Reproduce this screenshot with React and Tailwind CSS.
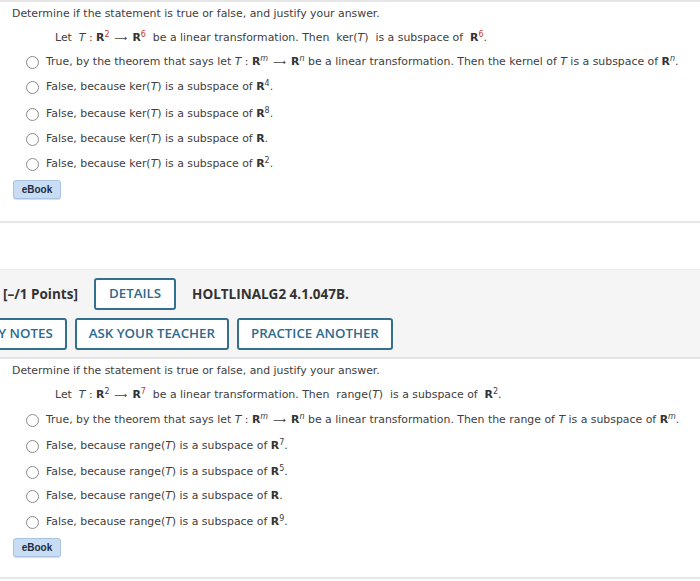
import React from "react";

const body = { fontFamily: '"DejaVu Sans", Verdana, sans-serif' };
const ui = { fontFamily: '"Open Sans", "Liberation Sans", sans-serif' };

function R({ sup, red, it }) {
  return (
    <span>
      <b className="text-[#333]">R</b>
      {sup && (
        <sup className={`text-[8px] ${red ? "text-[#c0392b]" : ""} ${it ? "italic" : ""}`}>{sup}</sup>
      )}
    </span>
  );
}

function T() {
  return <i>T</i>;
}

function Arrow() {
  return <span className="mx-[5px] text-[9px]">&#x27F6;</span>;
}

function Radio() {
  return (
    <span className="inline-block w-[13px] h-[13px] rounded-full border border-[#8a8a8a] bg-white mr-[7px] shrink-0" />
  );
}

function Option({ h, children }) {
  return (
    <div className={`flex items-center pl-[26px] ${h}`}>
      <Radio />
      <span>{children}</span>
    </div>
  );
}

function EBook() {
  return (
    <div className="pl-[13px] mt-[2px]">
      <button
        className="w-[48px] h-[19px] rounded-[3px] border border-[#a8c4e0] bg-[#c8ddf3] text-[10px] font-bold text-[#1c2c44] shadow-[0_1px_1px_rgba(0,0,0,0.15)]"
        style={{ fontFamily: '"Liberation Sans", Arial, sans-serif' }}
      >
        eBook
      </button>
    </div>
  );
}

function Question1() {
  return (
    <div className="border-b-2 border-[#e6e6e6] h-[221px] text-[#404040] text-[10.9px]" style={body}>
      <div className="h-[24px] flex items-center pl-[12px]">
        Determine if the statement is true or false, and justify your answer.
      </div>
      <div className="h-[24px] flex items-center pl-[55px]">
        <span>
          Let&nbsp; <T /> : <R sup="2" red />
          <Arrow />
          <R sup="6" red />&nbsp; be a linear transformation. Then&nbsp; ker(<T />)&nbsp; is a subspace of&nbsp; <R sup="6" red />.
        </span>
      </div>
      <Option h="h-[24px]">
        True, by the theorem that says let <T /> : <R sup="m" it />
        <Arrow />
        <R sup="n" it /> be a linear transformation. Then the kernel of <T /> is a subspace of <R sup="n" it />.
      </Option>
      <Option h="h-[27px]">
        False, because ker(<T />) is a subspace of <R sup="4" />.
      </Option>
      <Option h="h-[27px]">
        False, because ker(<T />) is a subspace of <R sup="8" />.
      </Option>
      <Option h="h-[23px]">
        False, because ker(<T />) is a subspace of <R />.
      </Option>
      <Option h="h-[27px]">
        False, because ker(<T />) is a subspace of <R sup="2" />.
      </Option>
      <EBook />
    </div>
  );
}

function Question2() {
  return (
    <div className="border-b-2 border-[#e6e6e6] h-[220px] text-[#404040] text-[10.9px]" style={body}>
      <div className="h-[24px] flex items-center pl-[12px]">
        Determine if the statement is true or false, and justify your answer.
      </div>
      <div className="h-[25px] flex items-center pl-[55px]">
        <span>
          Let&nbsp; <T /> : <R sup="2" />
          <Arrow />
          <R sup="7" red />&nbsp; be a linear transformation. Then&nbsp; range(<T />)&nbsp; is a subspace of&nbsp; <R sup="2" />.
        </span>
      </div>
      <Option h="h-[25px]">
        True, by the theorem that says let <T /> : <R sup="m" it />
        <Arrow />
        <R sup="n" it /> be a linear transformation. Then the range of <T /> is a subspace of <R sup="m" it />.
      </Option>
      <Option h="h-[27px]">
        False, because range(<T />) is a subspace of <R sup="7" />.
      </Option>
      <Option h="h-[25px]">
        False, because range(<T />) is a subspace of <R sup="5" />.
      </Option>
      <Option h="h-[23px]">
        False, because range(<T />) is a subspace of <R />.
      </Option>
      <Option h="h-[28px]">
        False, because range(<T />) is a subspace of <R sup="9" />.
      </Option>
      <EBook />
    </div>
  );
}

function OutlineButton({ children, className = "" }) {
  return (
    <button
      className={`h-[32px] px-[12px] rounded-[3px] border-2 border-[#336f8e] bg-white text-[13.3px] font-semibold text-[#2d6a8b] ${className}`}
      style={ui}
    >
      {children}
    </button>
  );
}

function Header() {
  return (
    <div className="bg-[#f5f5f5] border-t border-[#ececec] border-b-2 border-b-[#e4e4e4] h-[90px] pt-[8px] overflow-hidden">
      <div className="flex items-center h-[32px]" style={ui}>
        <span className="pl-[3px] text-[13.5px] font-bold text-[#333] w-[94px]">[–/1 Points]</span>
        <OutlineButton className="px-[13px]">DETAILS</OutlineButton>
        <span className="ml-[16px] text-[13.5px] font-bold text-[#333]">HOLTLINALG2 4.1.047B.</span>
      </div>
      <div className="flex items-center gap-[8px] mt-[8px] -ml-[28px]">
        <OutlineButton>MY NOTES</OutlineButton>
        <OutlineButton>ASK YOUR TEACHER</OutlineButton>
        <OutlineButton>PRACTICE ANOTHER</OutlineButton>
      </div>
    </div>
  );
}

export default function App() {
  return (
    <div className="w-[700px] h-[581px] bg-white overflow-hidden border-t-2 border-[#e6e6e6]">
      <Question1 />
      <div className="h-[46px]" />
      <Header />
      <Question2 />
    </div>
  );
}
